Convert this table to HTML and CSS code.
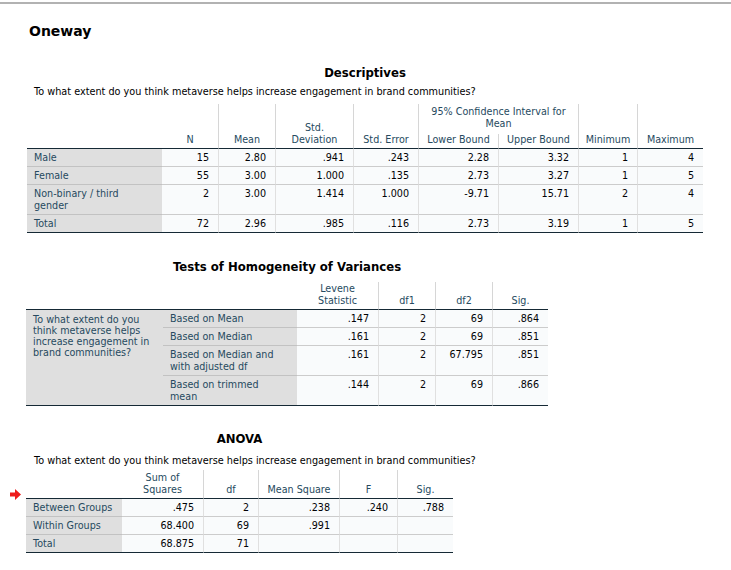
FILE: index.html
```html
<!DOCTYPE html>
<html lang="en">
<head>
<meta charset="utf-8">
<title>Oneway</title>
<link rel="stylesheet" href="styles.css">
</head>
<body>
<div class="rule"></div>
<main class="output">
  <h1 class="heading">Oneway</h1>

  <section class="pivot pivot-desc">
    <h2 class="pivot-title">Descriptives</h2>
    <p class="pivot-caption">To what extent do you think metaverse helps increase engagement in brand communities?</p>
    <table class="grid grid-desc">
      <colgroup>
        <col class="w135"><col class="w56"><col class="w57"><col class="w78"><col class="w65"><col class="w80"><col class="w80"><col class="w59"><col class="w66">
      </colgroup>
      <thead>
        <tr class="hrow-top">
          <th class="corner" rowspan="2"></th>
          <th class="nol" rowspan="2">N</th>
          <th rowspan="2">Mean</th>
          <th rowspan="2">Std.<br>Deviation</th>
          <th rowspan="2">Std. Error</th>
          <th class="spanhead" colspan="2">95% Confidence Interval for<br>Mean</th>
          <th rowspan="2">Minimum</th>
          <th rowspan="2">Maximum</th>
        </tr>
        <tr class="hrow-sub">
          <th>Lower Bound</th>
          <th>Upper Bound</th>
        </tr>
      </thead>
      <tbody>
        <tr>
          <th class="label">Male</th>
          <td class="num nol">15</td><td class="num">2.80</td><td class="num">.941</td><td class="num">.243</td><td class="num">2.28</td><td class="num">3.32</td><td class="num">1</td><td class="num">4</td>
        </tr>
        <tr>
          <th class="label">Female</th>
          <td class="num nol">55</td><td class="num">3.00</td><td class="num">1.000</td><td class="num">.135</td><td class="num">2.73</td><td class="num">3.27</td><td class="num">1</td><td class="num">5</td>
        </tr>
        <tr>
          <th class="label">Non-binary / third<br>gender</th>
          <td class="num nol">2</td><td class="num">3.00</td><td class="num">1.414</td><td class="num">1.000</td><td class="num">-9.71</td><td class="num">15.71</td><td class="num">2</td><td class="num">4</td>
        </tr>
        <tr class="last">
          <th class="label">Total</th>
          <td class="num nol">72</td><td class="num">2.96</td><td class="num">.985</td><td class="num">.116</td><td class="num">2.73</td><td class="num">3.19</td><td class="num">1</td><td class="num">5</td>
        </tr>
      </tbody>
    </table>
  </section>

  <section class="pivot pivot-homog">
    <h2 class="pivot-title">Tests of Homogeneity of Variances</h2>
    <table class="grid grid-homog">
      <colgroup>
        <col class="w137"><col class="w134"><col class="w81"><col class="w57"><col class="w57"><col class="w56">
      </colgroup>
      <thead>
        <tr class="hrow-homog">
          <th class="corner" colspan="2"></th>
          <th class="nol">Levene<br>Statistic</th>
          <th>df1</th>
          <th>df2</th>
          <th>Sig.</th>
        </tr>
      </thead>
      <tbody>
        <tr>
          <th class="label label-group last-cell" rowspan="4">To what extent do you<br>think metaverse helps<br>increase engagement in<br>brand communities?</th>
          <th class="label">Based on Mean</th>
          <td class="num nol">.147</td><td class="num">2</td><td class="num">69</td><td class="num">.864</td>
        </tr>
        <tr>
          <th class="label">Based on Median</th>
          <td class="num nol">.161</td><td class="num">2</td><td class="num">69</td><td class="num">.851</td>
        </tr>
        <tr>
          <th class="label">Based on Median and<br>with adjusted df</th>
          <td class="num nol">.161</td><td class="num">2</td><td class="num">67.795</td><td class="num">.851</td>
        </tr>
        <tr class="last">
          <th class="label">Based on trimmed<br>mean</th>
          <td class="num nol">.144</td><td class="num">2</td><td class="num">69</td><td class="num">.866</td>
        </tr>
      </tbody>
    </table>
  </section>

  <section class="pivot pivot-anova">
    <svg class="marker" width="11" height="11" viewBox="0 0 11 11" aria-hidden="true"><polygon points="0,3.4 5,3.4 5,0 11,5.5 5,11 5,7.6 0,7.6" fill="#ee1c1c"/></svg>
    <h2 class="pivot-title">ANOVA</h2>
    <p class="pivot-caption">To what extent do you think metaverse helps increase engagement in brand communities?</p>
    <table class="grid grid-anova">
      <colgroup>
        <col class="w96"><col class="w81"><col class="w55"><col class="w81"><col class="w58"><col class="w56">
      </colgroup>
      <thead>
        <tr class="hrow-anova">
          <th class="corner"></th>
          <th class="nol">Sum of<br>Squares</th>
          <th>df</th>
          <th>Mean Square</th>
          <th>F</th>
          <th>Sig.</th>
        </tr>
      </thead>
      <tbody>
        <tr>
          <th class="label">Between Groups</th>
          <td class="num nol">.475</td><td class="num">2</td><td class="num">.238</td><td class="num">.240</td><td class="num">.788</td>
        </tr>
        <tr>
          <th class="label">Within Groups</th>
          <td class="num nol">68.400</td><td class="num">69</td><td class="num">.991</td><td class="num"></td><td class="num"></td>
        </tr>
        <tr class="last">
          <th class="label">Total</th>
          <td class="num nol">68.875</td><td class="num">71</td><td class="num"></td><td class="num"></td><td class="num"></td>
        </tr>
      </tbody>
    </table>
  </section>
</main>
</body>
</html>
```

FILE: styles.css
```css
* { box-sizing: border-box; }

html, body {
  margin: 0;
  padding: 0;
  background: #ffffff;
}

body {
  width: 731px;
  height: 570px;
  overflow: hidden;
  font-family: "DejaVu Sans", "Liberation Sans", sans-serif;
  color: #000000;
}

.rule {
  height: 2px;
  margin-top: 2px;
  background: #b2b2b2;
}

.heading {
  margin: 19px 0 0 29px;
  font-size: 14px;
  line-height: 17px;
  font-weight: bold;
}

.pivot {
  position: relative;
  margin-left: 26px;
}

.pivot-desc { margin-left: 27px; width: 676px; padding-top: 26px; }
.pivot-homog { width: 522px; padding-top: 27px; }
.pivot-anova { width: 427px; padding-top: 26px; }

.pivot-title {
  margin: 0;
  font-size: 11.7px;
  line-height: 14px;
  font-weight: bold;
  text-align: center;
}

.pivot-caption {
  margin: 6px 0 0;
  padding-left: 8px;
  font-size: 9.7px;
  line-height: 12px;
  white-space: nowrap;
}

.pivot-desc .pivot-caption { padding-left: 7px; }
.pivot-anova .pivot-caption { margin-top: 9px; }

.grid {
  border-collapse: separate;
  border-spacing: 0;
  table-layout: fixed;
  font-size: 9.6px;
  line-height: 12px;
}

.grid-desc { width: 676px; margin-top: 6px; }
.grid-homog { width: 522px; margin-top: 8px; }
.grid-anova { width: 427px; margin-top: 3px; }

.w55 { width: 55px; }
.w56 { width: 56px; }
.w57 { width: 57px; }
.w58 { width: 58px; }
.w59 { width: 59px; }
.w65 { width: 65px; }
.w66 { width: 66px; }
.w78 { width: 78px; }
.w80 { width: 80px; }
.w81 { width: 81px; }
.w96 { width: 96px; }
.w134 { width: 134px; }
.w135 { width: 135px; }
.w137 { width: 137px; }

.grid thead th {
  font-weight: normal;
  color: #264a60;
  text-align: center;
  vertical-align: bottom;
  padding: 0 3px 2px;
  border-left: 1px solid #d6d6d6;
  border-bottom: 1px solid #152935;
  background: #ffffff;
  white-space: nowrap;
}

.grid thead th.corner,
.grid thead th.nol { border-left: 0; }

.grid thead th.spanhead {
  border-bottom: 0;
  padding-bottom: 4px;
}

.hrow-top { height: 30px; }
.hrow-sub { height: 15px; }
.hrow-homog { height: 28px; }
.hrow-anova { height: 29px; }

.grid tbody th.label {
  font-weight: normal;
  text-align: left;
  vertical-align: top;
  color: #264a60;
  background: #dfdfdf;
  padding: 3px 3px 2px 7px;
  border-bottom: 1px solid #c2c2c2;
  white-space: nowrap;
}

.grid tbody th.label-group {
  line-height: 11px;
  padding-top: 4px;
}

.grid tbody td.num {
  text-align: right;
  vertical-align: top;
  color: #010205;
  background: #f9fbfc;
  padding: 3px 9px 2px 3px;
  border-left: 1px solid #e0e0e0;
  border-bottom: 1px solid #cccccc;
  white-space: nowrap;
}

.grid tbody td.nol { border-left: 0; }

.grid tbody tr.last > th,
.grid tbody tr.last > td,
.grid tbody th.last-cell {
  border-bottom: 1px solid #152935;
}

.marker {
  position: absolute;
  left: -16px;
  top: 83px;
  display: block;
}
```
